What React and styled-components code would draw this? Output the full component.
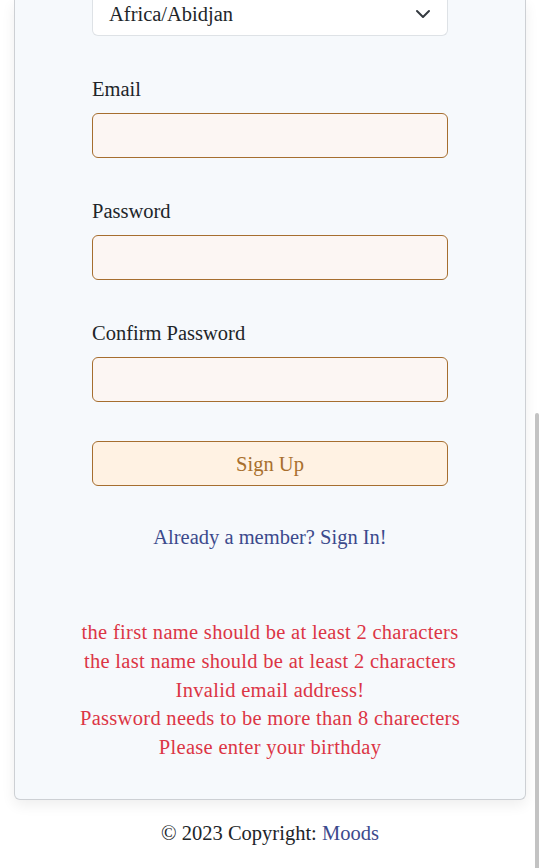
import React from 'react';
import styled, { createGlobalStyle } from 'styled-components';

const GlobalStyle = createGlobalStyle`
    html, body {
        margin: 0;
        padding: 0;
        background: #ffffff;
    }
    body {
        font-family: "Liberation Serif", "Times New Roman", serif;
        font-size: 20.5px;
        color: #212529;
    }
    * {
        box-sizing: border-box;
    }
`;

const Page = styled.div`
    min-height: 868px;
    padding: 0 14px;
`;

const Card = styled.form`
    background: #f6f9fc;
    border: 1px solid #cdd0d4;
    border-top: none;
    border-radius: 0 0 6px 6px;
    box-shadow: 0 5px 14px rgba(0, 0, 0, 0.07);
    padding: 0 77px 37px;
`;

const SelectBox = styled.div`
    display: flex;
    align-items: center;
    justify-content: space-between;
    height: 36px;
    padding: 0 16px 7px 16px;
    background: #ffffff;
    border: 1px solid #dee2e6;
    border-top: none;
    border-radius: 0 0 6px 6px;
    line-height: 28px;
    color: #212529;
`;

const Field = styled.div`
    margin-top: 40px;
`;

const Label = styled.label`
    display: block;
    line-height: 26px;
    margin-bottom: 11px;
    color: #212529;
`;

const Input = styled.input`
    display: block;
    width: 100%;
    height: 45px;
    padding: 0 15px;
    border: 1px solid #a66e2f;
    border-radius: 6px;
    background: #fcf6f3;
    font: inherit;
    outline: none;
`;

const SubmitButton = styled.button`
    display: block;
    width: 100%;
    height: 45px;
    margin-top: 39px;
    border: 1px solid #a66e2f;
    border-radius: 6px;
    background: #fff2e3;
    color: #a86f2d;
    font: inherit;
    line-height: 28px;
    cursor: pointer;
`;

const SignInLink = styled.a`
    display: block;
    margin-top: 37px;
    text-align: center;
    line-height: 28px;
    color: #3c4a8c;
    text-decoration: none;
`;

const Errors = styled.div`
    margin: 67px -77px 0;
    text-align: center;
    line-height: 28.8px;
    letter-spacing: 0.3px;
    color: #dc3545;
`;

const ErrorLine = styled.div`
    white-space: nowrap;
`;

const Footer = styled.footer`
    margin-top: 19px;
    text-align: center;
    line-height: 28px;
    color: #212529;

    a {
        color: #3c4a8c;
        text-decoration: none;
    }
`;

const Scrollbar = styled.div`
    position: fixed;
    top: 413px;
    bottom: 0;
    right: 1px;
    width: 4px;
    border-radius: 3px 3px 0 0;
    background: #c3c3c3;
`;

function Chevron() {
    return (
        <svg width='16' height='16' viewBox='0 0 16 16' fill='none'>
            <path
                d='m2 5 6 6 6-6'
                stroke='#343a40'
                strokeWidth='2'
                strokeLinecap='round'
                strokeLinejoin='round'
            />
        </svg>
    );
}

const errors = [
    'the first name should be at least 2 characters',
    'the last name should be at least 2 characters',
    'Invalid email address!',
    'Password needs to be more than 8 charecters',
    'Please enter your birthday',
];

function App() {
    return (
        <>
            <GlobalStyle />
            <Page>
                <Card onSubmit={(e) => e.preventDefault()}>
                    <SelectBox role='combobox'>
                        <span>Africa/Abidjan</span>
                        <Chevron />
                    </SelectBox>

                    <Field>
                        <Label htmlFor='email'>Email</Label>
                        <Input id='email' type='email' />
                    </Field>

                    <Field>
                        <Label htmlFor='password'>Password</Label>
                        <Input id='password' type='password' />
                    </Field>

                    <Field>
                        <Label htmlFor='confirm'>Confirm Password</Label>
                        <Input id='confirm' type='password' />
                    </Field>

                    <SubmitButton type='submit'>Sign Up</SubmitButton>

                    <SignInLink href='#'>Already a member? Sign In!</SignInLink>

                    <Errors>
                        {errors.map((msg) => (
                            <ErrorLine key={msg}>{msg}</ErrorLine>
                        ))}
                    </Errors>
                </Card>

                <Footer>
                    © 2023 Copyright: <a href='#'>Moods</a>
                </Footer>
            </Page>
            <Scrollbar />
        </>
    );
}

export default App;
